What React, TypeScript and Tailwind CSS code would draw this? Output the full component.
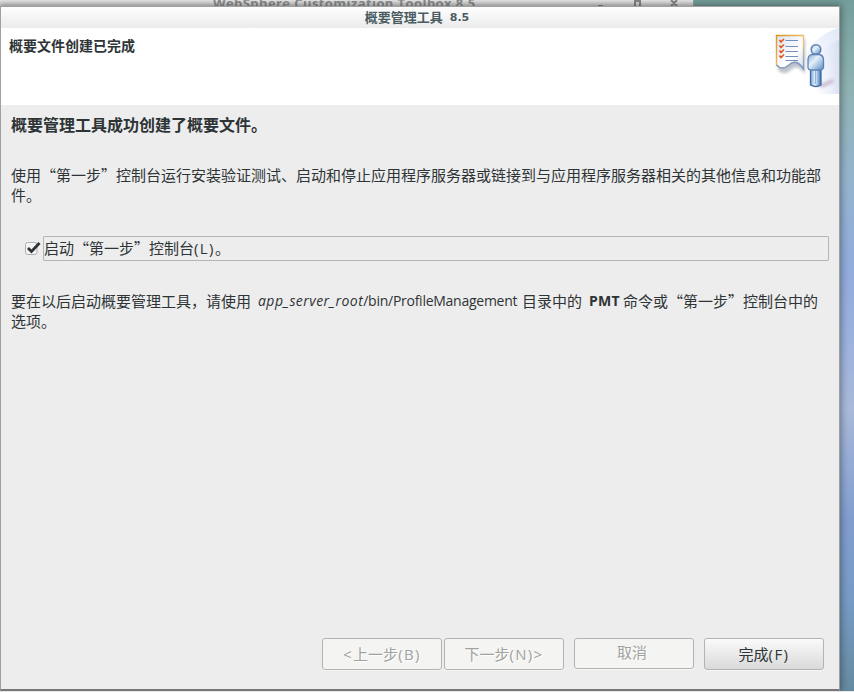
import type { ReactNode } from "react";
import { clsx } from "clsx";

function Latin({ children, className }: { children: ReactNode; className?: string }) {
  return (
    <span className={clsx("font-['Open_Sans','Noto_Sans',sans-serif]", className)}>{children}</span>
  );
}

function WizardIcon() {
  return (
    <svg width="72" height="66" viewBox="0 0 72 66" className="block">
      <defs>
        <linearGradient id="glow" x1="0" y1="1" x2="1" y2="0">
          <stop offset="0.2" stopColor="#ffffff" />
          <stop offset="1" stopColor="#e2e8f8" />
        </linearGradient>
        <linearGradient id="sweep" x1="0" y1="0" x2="1" y2="0">
          <stop offset="0" stopColor="#ffffff" stopOpacity="0" />
          <stop offset="1" stopColor="#cfdaf3" />
        </linearGradient>
        <linearGradient id="paper" x1="0" y1="0" x2="1" y2="1">
          <stop offset="0" stopColor="#d8e2f4" />
          <stop offset="0.6" stopColor="#ffffff" />
          <stop offset="1" stopColor="#cfdcf0" />
        </linearGradient>
        <linearGradient id="frame" x1="0" y1="0" x2="1" y2="1">
          <stop offset="0" stopColor="#de9220" />
          <stop offset="0.6" stopColor="#f3c677" />
          <stop offset="1" stopColor="#8198c6" />
        </linearGradient>
        <linearGradient id="body" x1="0" y1="0" x2="1" y2="1">
          <stop offset="0" stopColor="#8fb0d8" />
          <stop offset="0.4" stopColor="#e4f1f9" />
          <stop offset="1" stopColor="#5a8ac4" />
        </linearGradient>
        <linearGradient id="legs" x1="0" y1="0" x2="1" y2="0">
          <stop offset="0" stopColor="#7ba3d2" />
          <stop offset="0.45" stopColor="#e8f5fb" />
          <stop offset="1" stopColor="#3d70b5" />
        </linearGradient>
        <filter id="soft" x="-30%" y="-30%" width="160%" height="160%">
          <feGaussianBlur stdDeviation="1.6" />
        </filter>
      </defs>
      <path d="M72 0C57 4 43 15 36 30V66H72Z" fill="url(#glow)" />
      <path d="M72 12C59 17 46 30 42 66H72Z" fill="url(#sweep)" opacity="0.7" />
      <path d="M11 11H38V46Q31 36 25 41Q17 49 11 42Z" fill="#7d8797" opacity="0.5" filter="url(#soft)" />
      <path d="M9.5 7.5H36.5V41Q29 30 22 37Q15 43 9.5 37Z" fill="url(#paper)" stroke="url(#frame)" strokeWidth="1.4" />
      <path d="M9.5 37Q15 43 22 37Q29 30 36.5 41" fill="none" stroke="#839cc7" strokeWidth="1.4" />
      <path d="M18.5 12.5H31M18.5 18.5H31M18.5 23.5H31M18.5 28.5H31M18.5 32.5H31" stroke="#7590bd" />
      <g fill="none" stroke="#e4571c" strokeWidth="1.7">
        <path d="M12.5 12L14 14L17 11" />
        <path d="M12.5 17.5L14 19.5L17 16.5" />
        <path d="M12.5 22.5L14 24.5L17 21.5" />
        <path d="M12.5 27.5L14 29.5L17 26.5" />
      </g>
      <path d="M51 57L66 51L67 54L55 60Z" fill="#af8fae" opacity="0.55" filter="url(#soft)" />
      <path d="M43.5 41H54V57Q49 60 43.5 57Z" fill="url(#legs)" stroke="#3e69a7" strokeWidth="1.3" />
      <path d="M48.5 43V56" stroke="#7ba3d2" strokeWidth="0.8" />
      <path d="M44.5 26.5H52.5Q56.5 27.5 56.5 32V40Q55.5 42 53 42H44Q41.5 42 41 40V32Q41 27.5 44.5 26.5Z" fill="url(#body)" stroke="#5c80b3" strokeWidth="1.3" />
      <circle cx="49" cy="21.5" r="4.8" fill="url(#body)" stroke="#5c80b3" strokeWidth="1.5" />
    </svg>
  );
}

function WizardButton({ children, primary, className }: { children: ReactNode; primary?: boolean; className?: string }) {
  return (
    <button
      type="button"
      disabled={!primary}
      className={clsx(
        "flex w-[120px] items-center justify-center whitespace-nowrap rounded-[3px] border border-[#b3b3b2] text-[15px] leading-5",
        primary
          ? "bg-linear-to-b from-[#fafafa] to-[#dadada] text-[#2e3436] shadow-[0_1px_0_#f6f6f6]"
          : "bg-[#f4f4f2] text-[#a0a2a0] shadow-[0_1px_0_#f6f6f6] [text-shadow:1px_1px_0_#fff]",
        className,
      )}
    >
      {children}
    </button>
  );
}

function BackgroundWindow() {
  return (
    <div className="flex h-[7px] w-[694px] overflow-hidden border-r border-[#8fa5a2] bg-linear-to-b from-[#e8e8e8] to-[#c8c8c8] text-[#8b8e8d]">
      <Latin className="ml-[213px] mt-[-5px] w-[384px] whitespace-nowrap text-[13px] font-bold leading-4">
        <span className="inline-block tracking-[0.42px]">WebSphere Customization Toolbox 8.5</span>
      </Latin>
      <svg width="90" height="7" viewBox="0 0 90 7" fill="none" stroke="#858585" strokeWidth="2">
        <path d="M1 6H6M38 6V1H43V6M74 0L80 6M80 0L74 6" />
      </svg>
    </div>
  );
}

export default function App() {
  return (
    <div
      lang="zh-CN"
      className="flex h-[692px] w-[854px] flex-col overflow-hidden bg-[linear-gradient(#739e9b_0px,#8fb2b3_90px,#94b4ce_180px,#92abdc_270px,#9cb2dd_340px,#a8b9da_410px,#819dce_520px,#769bc5_600px,#658ba1_690px)] font-['Noto_Sans_CJK_SC',sans-serif] text-[#2e3436]"
    >
      <BackgroundWindow />
      <div className="-mt-px flex h-[685px] w-[840px] shrink-0 flex-col border border-b-2 border-[#a0a0a0] border-b-[#777] bg-[#ededed] shadow-[0_0_7px_1px_rgba(0,0,0,0.4)]">
        <div className="flex h-[21px] shrink-0 items-center justify-center bg-linear-to-b from-[#fefefe] to-[#ebebeb] pr-[6px] pb-[2px] text-[13px] font-bold leading-[19px] text-[#4a5b62]">
          <span>概要管理工具</span>
          <span className="ml-[7px] mt-[2px] font-['DejaVu_Sans',sans-serif] text-[11px]">8.5</span>
        </div>
        <header className="flex h-[77px] shrink-0 justify-between bg-white pl-2">
          <h1 className="mt-[7px] text-[14px] font-bold leading-5">概要文件创建已完成</h1>
          <WizardIcon />
        </header>
        <main className="flex flex-1 flex-col pl-[10px] pr-[10px] text-[15px] leading-5">
          <h2 className="mt-[9px] text-[16px] font-bold leading-5">概要管理工具成功创建了概要文件。</h2>
          <p className="mt-[31px] whitespace-nowrap">
            使用“第一步”控制台运行安装验证测试、启动和停止应用程序服务器或链接到与应用程序服务器相关的其他信息和功能部
            <br />
            件。
          </p>
          <label className="mt-[31px] flex h-[25px] items-center pl-[14px]">
            <svg width="18" height="16" viewBox="0 0 18 16" className="mb-[2px] shrink-0">
              <rect x="0.5" y="2.5" width="11.5" height="12" rx="2" fill="#f3f3f3" stroke="#aeb0ae" />
              <path d="M3 8L6.5 11.5L14.5 3" fill="none" stroke="#2e3436" strokeWidth="2.8" />
            </svg>
            <span className="h-[25px] flex-1 whitespace-nowrap rounded-[1px] border border-[#b5b5b4] pt-px">
              启动“第一步”控制台<Latin className="tracking-[1.4px]">(L)</Latin>。
            </span>
          </label>
          <div className="mt-[30px] whitespace-nowrap">
            <p className="flex h-5">
              <span className="w-[247px]">要在以后启动概要管理工具，请使用</span>
              <Latin className="w-[264px] text-[14px]">
                <i className="tracking-[0.45px]">app_server_root</i>
                <span className="tracking-[-0.26px]">/bin/ProfileManagement</span>
              </Latin>
              <span className="w-[67px]">目录中的</span>
              <Latin className="w-[34px] text-[14px] font-bold tracking-[0.3px]">PMT</Latin>
              <span>命令或“第一步”控制台中的</span>
            </p>
            <p>选项。</p>
          </div>
        </main>
        <footer className="flex h-[51px] shrink-0 justify-end pr-[15px]">
          <WizardButton className="h-8">
            <Latin className="tracking-[1.4px]">&lt;</Latin>上一步<Latin className="tracking-[1.4px]">(B)</Latin>
          </WizardButton>
          <WizardButton className="ml-[2px] h-8">
            下一步<Latin className="tracking-[1.3px]">(N)&gt;</Latin>
          </WizardButton>
          <WizardButton className="ml-[10px] h-[31px] pr-[4px] pb-[3px]">取消</WizardButton>
          <WizardButton primary className="ml-[10px] h-8">
            完成<Latin className="tracking-[1.4px]">(F)</Latin>
          </WizardButton>
        </footer>
      </div>
      <div className="h-px shrink-0 bg-[#e6e6e6]" />
    </div>
  );
}
